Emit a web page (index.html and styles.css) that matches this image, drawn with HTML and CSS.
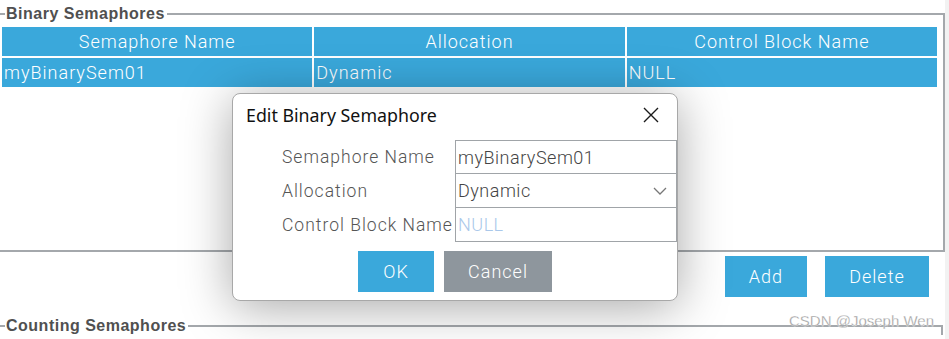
FILE: index.html
```html
<!DOCTYPE html>
<html>
<head>
    <title>Binary Semaphores</title>
    <link rel="stylesheet" href="styles.css">
</head>
<body>
    <div class="page">
        <fieldset class="group binary">
            <legend>Binary Semaphores</legend>
            <table class="grid">
                <tr>
                    <th>Semaphore Name</th>
                    <th>Allocation</th>
                    <th>Control Block Name</th>
                </tr>
                <tr class="selected">
                    <td>myBinarySem01</td>
                    <td>Dynamic</td>
                    <td>NULL</td>
                </tr>
            </table>
        </fieldset>

        <div class="actions">
            <button class="btn add">Add</button>
            <button class="btn delete">Delete</button>
        </div>

        <fieldset class="group counting">
            <legend>Counting Semaphores</legend>
        </fieldset>
    </div>

    <div class="dialog">
        <div class="dialog-title">
            <span>Edit Binary Semaphore</span>
            <svg class="close" width="16" height="16" viewBox="0 0 16 16">
                <path d="M1 1 L15 15 M15 1 L1 15" stroke="#1a1a1a" stroke-width="1.4" fill="none"/>
            </svg>
        </div>
        <div class="form">
            <label>Semaphore Name</label>
            <div class="field">myBinarySem01</div>
            <label>Allocation</label>
            <div class="field select">
                <span>Dynamic</span>
                <svg width="14" height="8" viewBox="0 0 14 8">
                    <path d="M1 1 L7 7 L13 1" stroke="#777" stroke-width="1.3" fill="none"/>
                </svg>
            </div>
            <label>Control Block Name</label>
            <div class="field placeholder">NULL</div>
        </div>
        <div class="dialog-buttons">
            <button class="btn ok">OK</button>
            <button class="btn cancel">Cancel</button>
        </div>
    </div>

    <div class="watermark">CSDN @Joseph Wen</div>
</body>
</html>
```

FILE: styles.css
```css
body {
    margin: 0;
    background: #f2f2f2;
    font-family: Roboto, "Liberation Sans", sans-serif;
    width: 949px;
    height: 339px;
    overflow: hidden;
    position: relative;
}
.page {
    width: 945px;
    height: 334px;
    padding-top: 5px;
    background: #fff;
    overflow: hidden;
}
.group {
    margin: 0 0 0 -3px;
    padding: 0 4px 0 4px;
    border: 2px solid #a4a8ac;
    border-left-width: 0;
    width: 936px;
}
.group legend {
    font-family: "Liberation Sans", Arial, sans-serif;
    font-weight: bold;
    font-size: 16px;
    color: #505050;
    padding: 0 2px 0 1px;
    margin-left: 4px;
    letter-spacing: 0.5px;
}
.binary {
    height: 243px;
}
.grid {
    border-collapse: separate;
    border-spacing: 2px;
    width: 939px;
    margin: 2px 0 0 -1px;
    font-size: 18px;
    font-weight: 300;
    color: #fff;
    letter-spacing: 1px;
}
.grid th,
.grid td {
    background: #3aa8db;
    height: 29px;
    padding: 0 2px;
    font-weight: 300;
}
.grid th {
    text-align: center;
    width: 33.3%;
}
.grid td {
    text-align: left;
}
.actions {
    display: flex;
    justify-content: flex-end;
    gap: 18px;
    padding: 4px 16px 0 0;
    height: 61px;
}
.btn {
    border: none;
    color: #fff;
    font-family: Roboto, "Liberation Sans", sans-serif;
    font-size: 18px;
    font-weight: 300;
    letter-spacing: 1px;
    height: 41px;
    cursor: pointer;
}
.add {
    background: #3aa8db;
    width: 82px;
}
.delete {
    background: #3aa8db;
    width: 104px;
}
.counting {
    height: 6px;
    border-bottom: none;
}
.dialog {
    position: absolute;
    left: 232px;
    top: 93px;
    width: 444px;
    height: 206px;
    background: #fff;
    border: 1px solid #a8a8a8;
    border-radius: 8px;
    box-shadow: 0 6px 50px rgba(0, 0, 0, 0.35);
}
.dialog-title {
    display: flex;
    justify-content: space-between;
    align-items: center;
    padding: 0 18px 2px 13px;
    height: 42px;
    font-family: "Noto Sans", "Open Sans", sans-serif;
    font-size: 17.8px;
    color: #111;
}
.form {
    display: grid;
    grid-template-columns: 222px 222px;
    grid-auto-rows: 34px;
    margin-top: 2px;
}
.form label {
    font-size: 17.5px;
    font-weight: 300;
    color: #555;
    letter-spacing: 1px;
    padding-left: 49px;
    display: flex;
    align-items: center;
    white-space: nowrap;
}
.field {
    border: 1px solid #a0a4a8;
    margin-top: -1px;
    font-size: 18px;
    font-weight: 300;
    color: #444;
    letter-spacing: 0.5px;
    padding: 0 2px;
    display: flex;
    align-items: center;
}
.form .field:first-of-type {
    margin-top: 0;
}
.select {
    justify-content: space-between;
    padding-right: 9px;
}
.placeholder {
    color: #aac8ea;
}
.dialog-buttons {
    display: flex;
    gap: 10px;
    padding: 9px 0 0 125px;
}
.ok {
    background: #3aa8db;
    width: 76px;
}
.cancel {
    background: #8e969d;
    width: 108px;
}
.watermark {
    position: absolute;
    left: 789px;
    top: 312px;
    font-family: "Liberation Sans", sans-serif;
    font-size: 15px;
    color: #999;
    -webkit-text-stroke: 0.3px #fff;
}
```
